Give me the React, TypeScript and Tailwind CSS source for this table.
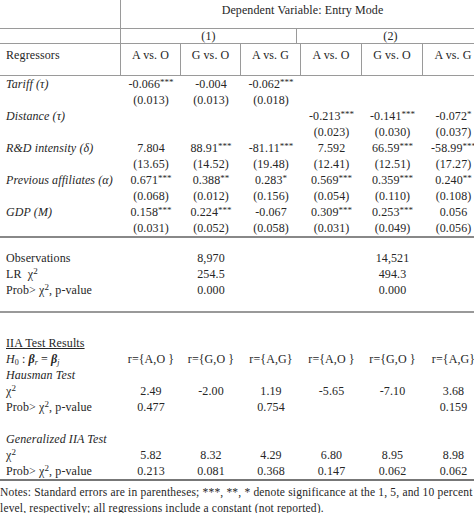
import React from "react";

const GRID = "grid grid-cols-[121px_60px_60px_60px_61px_61px_61px]";
const LINE = "border-[#9a9a9a]";

type Cell = string;

const coefRows: { label: string; vals: Cell[]; se: Cell[] }[] = [
	{
		label: "Tariff (τ)",
		vals: ["-0.066***", "-0.004", "-0.062***", "", "", ""],
		se: ["(0.013)", "(0.013)", "(0.018)", "", "", ""],
	},
	{
		label: "Distance (τ)",
		vals: ["", "", "", "-0.213***", "-0.141***", "-0.072*"],
		se: ["", "", "", "(0.023)", "(0.030)", "(0.037)"],
	},
	{
		label: "R&D intensity (δ)",
		vals: ["7.804", "88.91***", "-81.11***", "7.592", "66.59***", "-58.99***"],
		se: ["(13.65)", "(14.52)", "(19.48)", "(12.41)", "(12.51)", "(17.27)"],
	},
	{
		label: "Previous affiliates (α)",
		vals: ["0.671***", "0.388**", "0.283*", "0.569***", "0.359***", "0.240**"],
		se: ["(0.068)", "(0.012)", "(0.156)", "(0.054)", "(0.110)", "(0.108)"],
	},
	{
		label: "GDP (M)",
		vals: ["0.158***", "0.224***", "-0.067", "0.309***", "0.253***", "0.056"],
		se: ["(0.031)", "(0.052)", "(0.058)", "(0.031)", "(0.049)", "(0.056)"],
	},
];

function Num({ v }: { v: string }) {
	const m = v.match(/^([^*]*)(\**)$/);
	const base = m ? m[1] : v;
	const stars = m ? m[2] : "";
	return (
		<span>
			{base}
			{stars && <sup className="text-[9px] top-[-0.35em] tracking-normal">{stars}</sup>}
		</span>
	);
}

function Chi() {
	return (
		<span>
			χ<sup className="text-[9px]">2</sup>
		</span>
	);
}

function Row({
	label,
	vals,
	italic,
	className = "",
}: {
	label: React.ReactNode;
	vals: Cell[];
	italic?: boolean;
	className?: string;
}) {
	return (
		<div className={`${GRID} h-4 leading-4 ${className}`}>
			<div className={`pl-[6px] whitespace-nowrap ${italic ? "italic" : ""}`}>{label}</div>
			{vals.map((v, i) => (
				<div key={i} className="text-center whitespace-nowrap">
					{v && <Num v={v} />}
				</div>
			))}
		</div>
	);
}

export default function App() {
	const blank = ["", "", "", "", "", ""];
	return (
		<div className="w-[474px] h-[513px] overflow-hidden bg-white text-[#262626] text-[12px] tracking-[0.1px] font-['Liberation_Serif',serif]">
			<div className="w-[484px]">
				{/* header */}
				<div className={`${GRID} h-[29px] border-b ${LINE}`}>
					<div className={`border-r ${LINE}`}></div>
					<div className="col-span-6 text-center pt-px">Dependent Variable: Entry Mode</div>
				</div>
				<div className={`grid grid-cols-[121px_176px_187px] h-[15px] leading-[15px] border-b ${LINE}`}>
					<div className={`border-r ${LINE}`}></div>
					<div className={`border-r ${LINE} text-center`}>(1)</div>
					<div className="text-center">(2)</div>
				</div>
				<div className={`${GRID} h-[32px] border-b ${LINE}`}>
					<div className={`border-r ${LINE} pl-[6px] pt-[2px]`}>Regressors</div>
					{["A vs. O", "G vs. O", "A vs. G", "A vs. O", "G vs. O", "A vs. G"].map((h, i) => (
						<div key={i} className={`border-r ${LINE} text-center pt-[2px]`}>
							{h}
						</div>
					))}
				</div>

				{/* coefficients */}
				<div className="border-b-2 border-[#888]">
					{coefRows.map((r) => (
						<React.Fragment key={r.label}>
							<Row label={r.label} vals={r.vals} italic />
							<Row label="" vals={r.se} />
						</React.Fragment>
					))}
				</div>

				{/* fit statistics */}
				<div className="pt-3 pb-[13px] border-b-2 border-[#999]">
					<Row label="Observations" vals={["", "8,970", "", "", "14,521", ""]} />
					<Row
						label={
							<span>
								LR&nbsp; <Chi />
							</span>
						}
						vals={["", "254.5", "", "", "494.3", ""]}
					/>
					<Row
						label={
							<span>
								Prob&gt; <Chi />, p-value
							</span>
						}
						vals={["", "0.000", "", "", "0.000", ""]}
					/>
				</div>

				{/* IIA tests */}
				<div className="pt-[22px] border-b-2 border-[#777]">
					<Row label={<span className="underline">IIA Test Results</span>} vals={blank} />
					<div className={`${GRID} h-4 leading-4`}>
						<div className="pl-[6px] whitespace-nowrap">
							<i>H</i>
							<sub className="text-[8px]">0</sub> : <i className="font-semibold">β</i>
							<sub className="text-[8px] italic">r</sub> = <i className="font-semibold">β</i>
							<sub className="text-[8px] italic">j</sub>
						</div>
						{["r={A,O }", "r={G,O }", "r={A,G}", "r={A,O }", "r={G,O }", "r={A,G}"].map((h, i) => (
							<div key={i} className="text-center whitespace-nowrap">
								{h}
							</div>
						))}
					</div>
					<Row label="Hausman Test" vals={blank} italic />
					<Row label={<Chi />} vals={["2.49", "-2.00", "1.19", "-5.65", "-7.10", "3.68"]} />
					<Row
						label={
							<span>
								Prob&gt; <Chi />, p-value
							</span>
						}
						vals={["0.477", "", "0.754", "", "", "0.159"]}
					/>
					<div className="h-4"></div>
					<Row label="Generalized IIA Test" vals={blank} italic />
					<Row label={<Chi />} vals={["5.82", "8.32", "4.29", "6.80", "8.95", "8.98"]} />
					<Row
						label={
							<span>
								Prob&gt; <Chi />, p-value
							</span>
						}
						vals={["0.213", "0.081", "0.368", "0.147", "0.062", "0.062"]}
					/>
				</div>

				{/* notes */}
				<div className="pt-[3px] leading-4 whitespace-nowrap text-[11.5px] tracking-[0.18px]">
					<div>Notes: Standard errors are in parentheses; ***, **, * denote significance at the 1, 5, and 10 percent</div>
					<div>level, respectively; all regressions include a constant (not reported).</div>
				</div>
			</div>
		</div>
	);
}
